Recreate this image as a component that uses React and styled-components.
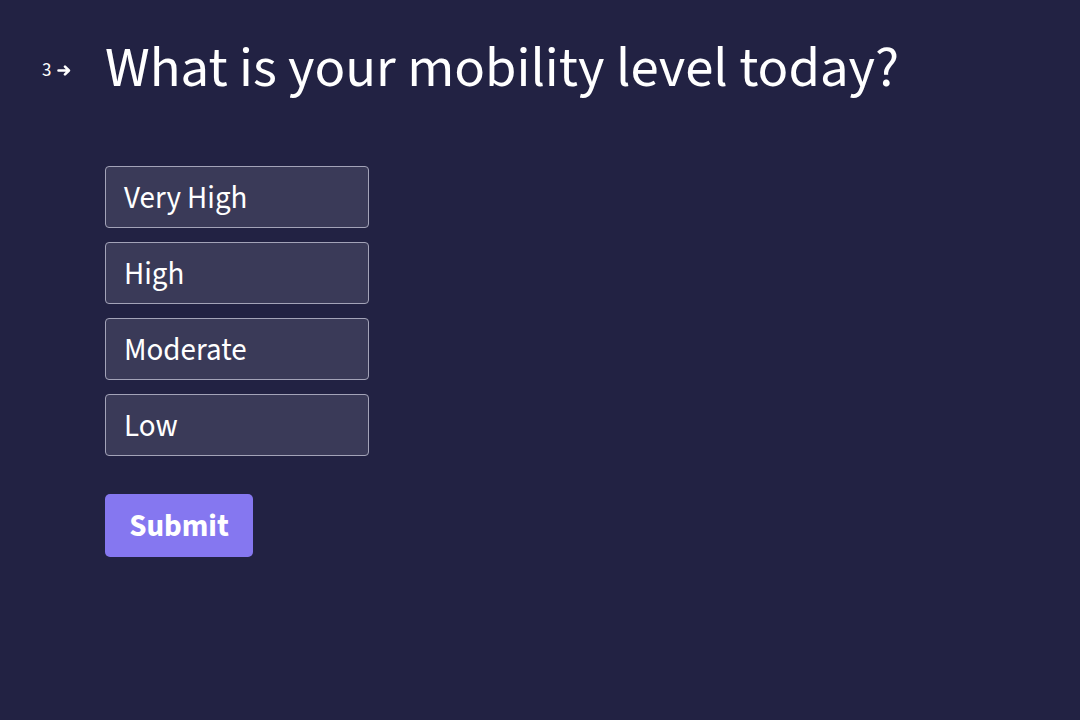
import styled, { createGlobalStyle } from 'styled-components';

const GlobalStyle = createGlobalStyle`
  html, body {
    margin: 0;
    padding: 0;
    background: #222243;
    font-family: "Source Sans 3", "Source Sans Pro", "Noto Sans", sans-serif;
    color: #ffffff;
  }
`;

const Page = styled.main`
  min-height: 720px;
  padding: 34px 0 0 42px;
  box-sizing: border-box;
`;

const QuestionRow = styled.div`
  display: flex;
  align-items: center;
`;

const Step = styled.div`
  width: 63px;
  display: flex;
  align-items: center;
  gap: 6px;
  font-size: 19px;
  line-height: 1;
  padding-top: 3px;
`;

const Title = styled.h1`
  margin: 0;
  font-size: 56.8px;
  font-weight: 400;
  line-height: 70px;
`;

const Form = styled.form`
  margin: 62px 0 0 63px;
  display: flex;
  flex-direction: column;
  align-items: flex-start;
`;

const Options = styled.div`
  display: flex;
  flex-direction: column;
  gap: 14px;
`;

const Option = styled.button`
  width: 264px;
  height: 62px;
  box-sizing: border-box;
  padding: 1px 18px 0;
  text-align: left;
  background: #3a3a58;
  border: 1.5px solid #a3a3b8;
  border-radius: 4px;
  color: #ffffff;
  font-family: inherit;
  font-size: 31px;
  cursor: pointer;
`;

const Submit = styled.button`
  margin-top: 38px;
  width: 148px;
  height: 63px;
  padding: 0;
  border: none;
  border-radius: 5px;
  background: #8577f0;
  color: #ffffff;
  font-family: inherit;
  font-size: 31px;
  font-weight: 700;
  cursor: pointer;
`;

const options = ['Very High', 'High', 'Moderate', 'Low'];

export default function App() {
    return (
        <>
            <GlobalStyle />
            <Page>
                <QuestionRow>
                    <Step>
                        <span>3</span>
                        <svg width="14" height="11" viewBox="0 0 14 11" fill="none" stroke="#fff" strokeWidth="2.6" strokeLinecap="round" strokeLinejoin="round">
                            <path d="M1.5 5.5h10M8 1.6l3.9 3.9L8 9.4" />
                        </svg>
                    </Step>
                    <Title>What is your mobility level today?</Title>
                </QuestionRow>
                <Form onSubmit={(e) => e.preventDefault()}>
                    <Options>
                        {options.map((o) => (
                            <Option type="button" key={o}>{o}</Option>
                        ))}
                    </Options>
                    <Submit type="submit">Submit</Submit>
                </Form>
            </Page>
        </>
    );
}
